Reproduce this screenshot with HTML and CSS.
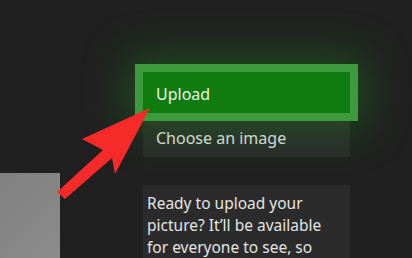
FILE: index.html
```html
<!DOCTYPE html>
<html lang="en">
<head>
    <meta charset="UTF-8">
    <meta name="viewport" content="width=device-width, initial-scale=1.0">
    <title>Upload picture</title>
    <link rel="stylesheet" href="styles.css">
</head>
<body>
    <div class="screen">
        <div class="preview-col">
            <div class="preview"></div>
        </div>

        <div class="menu-col">
            <ul class="menu">
                <li class="menu-item selected">Upload</li>
                <li class="menu-item">Choose an image</li>
            </ul>

            <div class="info-card">
                <p>Ready to upload your picture? It’ll be available for everyone to see, so</p>
            </div>
        </div>

        <!-- annotation arrow -->
        <svg class="pointer" width="412" height="258" viewBox="0 0 412 258">
            <polygon points="150,108 82,139 103,150 57,192 65,199 112,158 115,174" fill="#f72a2a"/>
        </svg>
    </div>
</body>
</html>
```

FILE: styles.css
```css
* {
    margin: 0;
    padding: 0;
    box-sizing: border-box;
}

body {
    font-family: 'Noto Sans', 'Open Sans', sans-serif;
    background-color: #202020;
    color: #e4e4e4;
    overflow: hidden;
}

.screen {
    position: relative;
    width: 412px;
    height: 258px;
    display: flex;
    gap: 83px;
}

.preview-col {
    width: 60px;
    padding-top: 173px;
}

.preview {
    height: 85px;
    background: linear-gradient(135deg, #808080, #8c8c8c);
}

.menu-col {
    width: 207px;
    padding-top: 72px;
}

.menu {
    list-style: none;
}

.menu-item {
    height: 44px;
    padding: 0 13px;
    display: flex;
    align-items: center;
    font-size: 16px;
    background: #2b2b2b;
    padding-top: 6px;
}

.menu-item.selected {
    position: relative;
    height: 41px;
    padding-top: 3px;
    background: #107c10;
    color: #e8f2e8;
    box-shadow: 0 0 0 8px #3d9a3d, 0 0 44px 16px rgba(30, 140, 30, 0.42);
    z-index: 1;
}

.info-card {
    margin-top: 28px;
    background: #2b2b2b;
    padding: 7px 4px 0 4px;
    height: 80px;
    font-size: 15.5px;
    line-height: 22px;
}

.pointer {
    position: absolute;
    top: 0;
    left: 0;
    z-index: 2;
}
```
